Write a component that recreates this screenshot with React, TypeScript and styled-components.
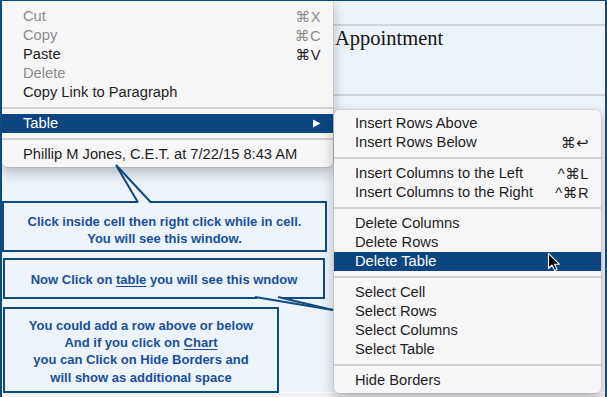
import React from 'react';
import styled, { createGlobalStyle } from 'styled-components';

const Global = createGlobalStyle`
  html, body { margin: 0; padding: 0; background: #eff1f4; }
  body { font-family: "Liberation Sans", "DejaVu Sans", sans-serif; }
`;

const NAVY = '#0e4a7e';
const PAGE = '#edf3fb';

const Frame = styled.div`
  position: relative;
  width: 607px;
  height: 397px;
  box-sizing: border-box;
  border-top: 1px solid ${NAVY};
  border-left: 2px solid ${NAVY};
  border-right: 2px solid ${NAVY};
  background: ${PAGE};
  overflow: hidden;
  display: flex;
  flex-direction: column;
`;

const DocRow = styled.div<{ $h: number }>`
  flex: none;
  display: grid;
  grid-template-columns: 332px 1fr;
  height: ${p => p.$h}px;
  border-bottom: 2px solid #d2d5d9;
`;

const Filler = styled.div`
  flex: 1;
`;

const BottomStrip = styled.div`
  flex: none;
  height: 4px;
  border-top: 1px solid #ffffff;
  background: #eef0f3;
`;

const Cell = styled.div`
  font-family: "Liberation Serif", "Times New Roman", serif;
  font-size: 20.5px;
  line-height: 24px;
  color: #141414;
  padding-left: 1px;
`;

const MenuPanel = styled.div`
  position: absolute;
  display: flex;
  flex-direction: column;
  background: #f6f6f6;
  box-shadow: 0 0 0 0.5px rgba(0, 0, 0, 0.14), 0 5px 14px rgba(0, 0, 0, 0.26);
  font-family: "Liberation Sans", "DejaVu Sans", sans-serif;
  font-size: 14.7px;
  color: #1e1e1e;
`;

const MainMenu = styled(MenuPanel)`
  left: 0;
  top: -1px;
  width: 331px;
  padding: 7px 0 3px;
  border-radius: 0 0 5px 5px;
  z-index: 2;
`;

const SubMenu = styled(MenuPanel)`
  left: 332px;
  top: 109px;
  width: 267px;
  padding: 4px 0 3px;
  border-radius: 5px;
  z-index: 3;
`;

const Item = styled.div<{ $disabled?: boolean; $active?: boolean }>`
  height: 19px;
  box-sizing: border-box;
  display: flex;
  align-items: center;
  justify-content: space-between;
  padding: 0 12px 1px 21px;
  white-space: nowrap;
  color: ${p => (p.$active ? '#ffffff' : p.$disabled ? '#8c8c8c' : '#1e1e1e')};
  background: ${p => (p.$active ? '#0c4580' : 'transparent')};
`;

const Shortcut = styled.span`
  font-family: "Liberation Sans", "DejaVu Sans", sans-serif;
  letter-spacing: 0.5px;
`;

const Sep = styled.div`
  height: 12px;
  display: flex;
  align-items: center;
  &::after {
    content: '';
    flex: 1;
    height: 2px;
    background: #d2d2d2;
  }
`;

const Callout = styled.div<{ $left: number; $top: number; $w: number; $h: number; $pt: number; $lh: number }>`
  position: absolute;
  left: ${p => p.$left}px;
  top: ${p => p.$top}px;
  width: ${p => p.$w}px;
  height: ${p => p.$h}px;
  box-sizing: border-box;
  padding-top: ${p => p.$pt}px;
  border: 2px solid ${NAVY};
  background: ${PAGE};
  color: #1a4f9a;
  font-family: "Liberation Sans", Arial, sans-serif;
  font-weight: bold;
  font-size: 13px;
  line-height: ${p => p.$lh}px;
  text-align: center;
  z-index: 4;
`;

const Line = styled.div`
  white-space: nowrap;
`;

const Under = styled.span`
  text-decoration: underline;
  text-underline-offset: 2px;
`;

const Overlay = styled.svg`
  position: absolute;
  left: -2px;
  top: -1px;
  width: 607px;
  height: 397px;
  pointer-events: none;
  z-index: 5;
`;

const Cursor = styled.svg`
  position: absolute;
  left: 545px;
  top: 251px;
  width: 14px;
  height: 20px;
  z-index: 6;
`;

const Arrow = () => (
  <svg width="8" height="9" viewBox="0 0 8 9">
    <polygon points="0,0.5 7.5,4.5 0,8.5" fill="#ffffff" />
  </svg>
);

type Row = { label: string; key?: string; disabled?: boolean; active?: boolean; arrow?: boolean } | 'sep';

const mainRows: Row[] = [
  { label: 'Cut', key: '⌘X', disabled: true },
  { label: 'Copy', key: '⌘C', disabled: true },
  { label: 'Paste', key: '⌘V' },
  { label: 'Delete', disabled: true },
  { label: 'Copy Link to Paragraph' },
  'sep',
  { label: 'Table', active: true, arrow: true },
  'sep',
  { label: 'Phillip M Jones, C.E.T. at 7/22/15 8:43 AM' },
];

const subRows: Row[] = [
  { label: 'Insert Rows Above' },
  { label: 'Insert Rows Below', key: '⌘↩' },
  'sep',
  { label: 'Insert Columns to the Left', key: '^⌘L' },
  { label: 'Insert Columns to the Right', key: '^⌘R' },
  'sep',
  { label: 'Delete Columns' },
  { label: 'Delete Rows' },
  { label: 'Delete Table', active: true },
  'sep',
  { label: 'Select Cell' },
  { label: 'Select Rows' },
  { label: 'Select Columns' },
  { label: 'Select Table' },
  'sep',
  { label: 'Hide Borders' },
];

const renderRows = (rows: Row[]) =>
  rows.map((r, i) =>
    r === 'sep' ? (
      <Sep key={i} />
    ) : (
      <Item key={i} $disabled={r.disabled} $active={r.active}>
        <span>{r.label}</span>
        {r.key && <Shortcut>{r.key}</Shortcut>}
        {r.arrow && <Arrow />}
      </Item>
    )
  );

export default function App() {
  return (
    <>
      <Global />
      <Frame>
        <DocRow $h={23}>
          <div />
          <div />
        </DocRow>
        <DocRow $h={68}>
          <div />
          <Cell>Appointment</Cell>
        </DocRow>
        <Filler />
        <BottomStrip />

        <MainMenu>{renderRows(mainRows)}</MainMenu>
        <SubMenu>{renderRows(subRows)}</SubMenu>

        <Callout $left={0} $top={200} $w={325} $h={51} $pt={10} $lh={17}>
          <Line>Click inside cell then right click while in cell.</Line>
          <Line>You will see this window.</Line>
        </Callout>
        <Callout $left={1} $top={257} $w={322} $h={41} $pt={11} $lh={17}>
          <Line>
            Now Click on <Under>table</Under> you will see this wndow
          </Line>
        </Callout>
        <Callout $left={1} $top={306} $w={276} $h={86} $pt={8} $lh={17.2}>
          <Line>You could add a row above or below</Line>
          <Line>
            And if you click on <Under>Chart</Under>
          </Line>
          <Line>you can Click on Hide Borders and</Line>
          <Line>will show as additional space</Line>
        </Callout>

        <Overlay viewBox="0 0 607 397">
          <polygon points="138,203.5 116,165 151,203.5" fill={PAGE} />
          <rect x="139" y="200.5" width="11" height="3.5" fill={PAGE} />
          <polyline points="138,202.5 116,165 151,202.5" fill="none" stroke={NAVY} strokeWidth="2" strokeLinejoin="bevel" />
          <polygon points="256,296 333,310 277,296" fill={PAGE} />
          <rect x="257" y="295.5" width="20" height="3.5" fill={PAGE} />
          <line x1="255" y1="297" x2="333" y2="310" stroke={NAVY} strokeWidth="2" />
          <line x1="278" y1="297" x2="333" y2="310" stroke={NAVY} strokeWidth="2" />
        </Overlay>

        <Cursor viewBox="0 0 14 20">
          <path d="M1.5,1.5 L1.5,16.5 L5,13 L7.6,18.6 L10,17.5 L7.5,12.2 L12.3,12.2 Z" fill="#000" stroke="#fff" strokeWidth="1.1" strokeLinejoin="round" />
        </Cursor>
      </Frame>
    </>
  );
}
